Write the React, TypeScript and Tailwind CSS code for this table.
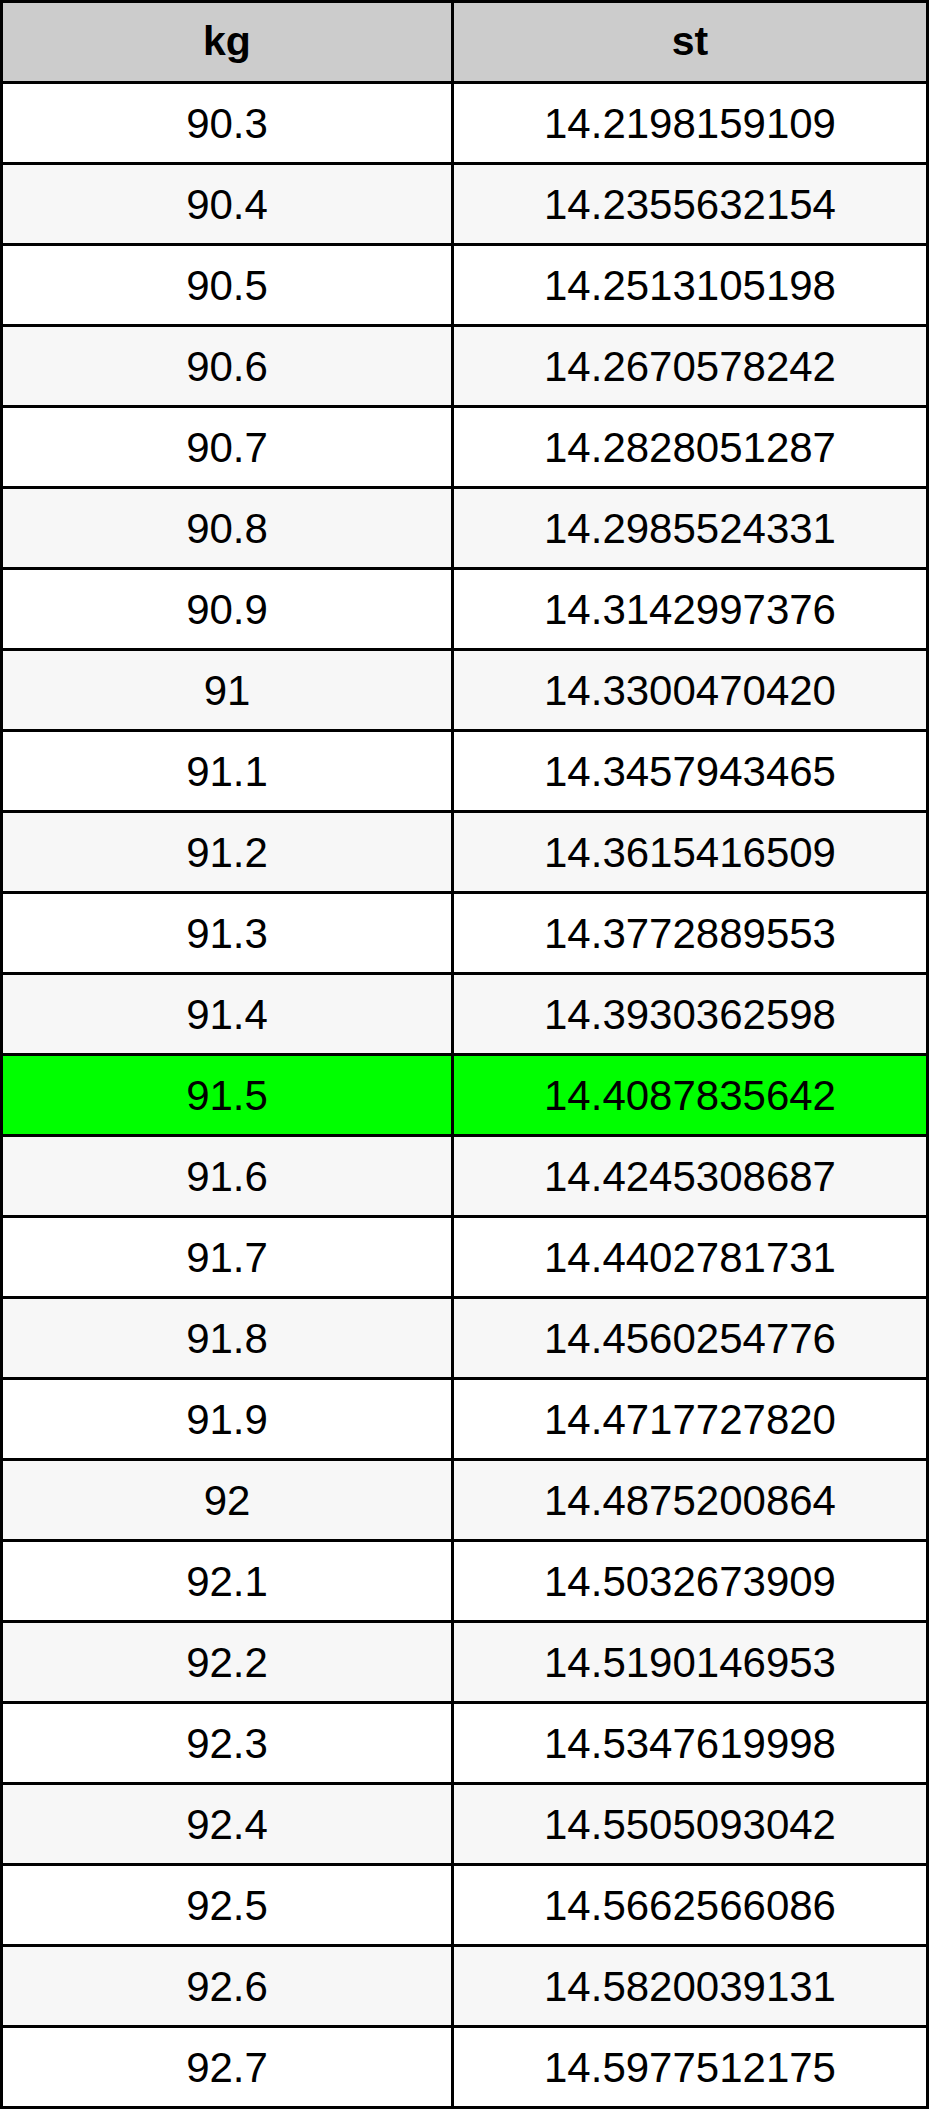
const rows: [string, string][] = [
  ["90.3", "14.2198159109"],
  ["90.4", "14.2355632154"],
  ["90.5", "14.2513105198"],
  ["90.6", "14.2670578242"],
  ["90.7", "14.2828051287"],
  ["90.8", "14.2985524331"],
  ["90.9", "14.3142997376"],
  ["91", "14.3300470420"],
  ["91.1", "14.3457943465"],
  ["91.2", "14.3615416509"],
  ["91.3", "14.3772889553"],
  ["91.4", "14.3930362598"],
  ["91.5", "14.4087835642"],
  ["91.6", "14.4245308687"],
  ["91.7", "14.4402781731"],
  ["91.8", "14.4560254776"],
  ["91.9", "14.4717727820"],
  ["92", "14.4875200864"],
  ["92.1", "14.5032673909"],
  ["92.2", "14.5190146953"],
  ["92.3", "14.5347619998"],
  ["92.4", "14.5505093042"],
  ["92.5", "14.5662566086"],
  ["92.6", "14.5820039131"],
  ["92.7", "14.5977512175"],
];

const HIGHLIGHT = "91.5";

const cellBase = "flex h-[78px] items-center justify-center";

export default function App() {
  return (
    <div className="min-h-screen bg-white font-['Liberation_Sans',Arial,sans-serif] text-[42px] text-black">
      <div className="grid w-[929px] grid-cols-[448px_472px] gap-[3px] bg-black p-[3px]">
        <div className={`${cellBase} bg-[#cccccc] text-[41px] font-bold`}>kg</div>
        <div className={`${cellBase} bg-[#cccccc] text-[41px] font-bold`}>st</div>
        {rows.map(([kg, st], i) => {
          const bg =
            kg === HIGHLIGHT ? "bg-[#00ff00]" : i % 2 === 0 ? "bg-white" : "bg-[#f7f7f7]";
          return [
            <div key={`${kg}-kg`} className={`${cellBase} ${bg}`}>
              {kg}
            </div>,
            <div key={`${kg}-st`} className={`${cellBase} ${bg}`}>
              {st}
            </div>,
          ];
        })}
      </div>
    </div>
  );
}
